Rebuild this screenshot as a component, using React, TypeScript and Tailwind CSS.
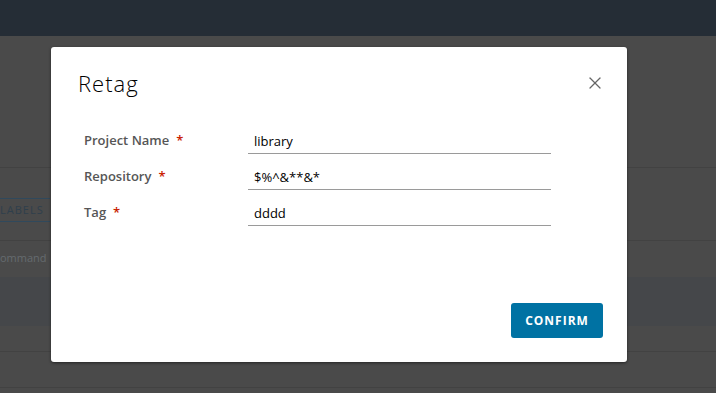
import { X } from "lucide-react"

const fields = [
  { label: "Project Name", value: "library" },
  { label: "Repository", value: "$%^&**&*" },
  { label: "Tag", value: "dddd" },
]

function Backdrop() {
  return (
    <div className="flex flex-col bg-[#4a4a4a] h-[357px]">
      <div className="h-[132px] border-b border-[#424242]" />
      <div className="h-[73px] border-b border-[#424242] flex items-start pt-[30px]">
        <div className="h-[24px] w-[50px] border-y border-[#30495c] flex items-center">
          <span className="text-[11px] font-medium tracking-[1px] text-[#2f3f4c]">LABELS</span>
        </div>
      </div>
      <div className="h-[36px] flex items-center text-[11px] font-medium text-[#656a6f] pb-[2px]">
        ommand
      </div>
      <div className="h-[49px] bg-[#45474a]" />
      <div className="h-[26px] border-b border-[#424242]" />
      <div className="h-[36px] border-b border-[#424242]" />
    </div>
  )
}

export default function App() {
  return (
    <div className="relative w-[716px] h-[393px] overflow-hidden font-['Open_Sans',sans-serif]">
      <div className="h-[36px] bg-[#252d36]" />
      <Backdrop />

      <div className="absolute left-[51px] top-[47px] w-[576px] h-[315px] bg-white rounded-[3px] shadow-[0_1px_3px_rgba(0,0,0,0.5)] flex flex-col">
        <div className="flex items-center justify-between pl-[27px] pr-[22px] pt-[20px]">
          <h1 className="text-[22px] font-light tracking-[1px] text-[#000] leading-[32px]">Retag</h1>
          <X size={20} strokeWidth={1.5} className="text-[#666]" />
        </div>

        <div className="flex flex-col mt-[19px] pl-[33px]">
          {fields.map((f) => (
            <div key={f.label} className="flex items-end h-[36px]">
              <div className="w-[164px] text-[13px] font-semibold text-[#565656] pb-[4px] flex gap-[7px]">
                <span>{f.label}</span>
                <span className="text-[#c92100]">*</span>
              </div>
              <div className="w-[303px] border-b border-[#9a9a9a] pl-[6px] pb-[2px] text-[13px] text-[#000]">
                {f.value}
              </div>
            </div>
          ))}
        </div>

        <div className="mt-auto flex justify-end pr-[24px] pb-[24px]">
          <button className="w-[92px] h-[35px] rounded-[3px] bg-[#0072a3] text-white text-[12px] font-bold tracking-[1px]">
            CONFIRM
          </button>
        </div>
      </div>
    </div>
  )
}
